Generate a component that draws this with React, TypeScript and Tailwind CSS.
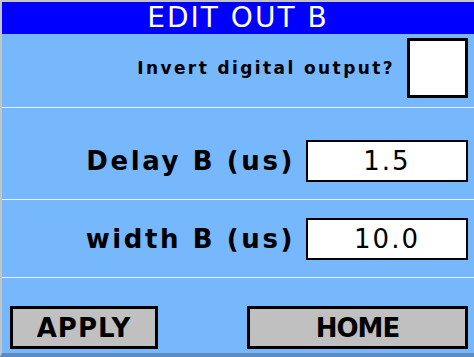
import React from 'react';

const font = { fontFamily: '"DejaVu Sans", "Liberation Sans", sans-serif' };

function Field({ label, value }: { label: string; value: string }) {
  return (
    <div className="flex justify-end items-start h-[77px] pt-[18px] pr-[6px]">
      <span className="h-[42px] flex items-center mr-[11px] text-[26px] font-bold tracking-[2.6px] text-black leading-none">
        {label}
      </span>
      <div className="w-[162px] h-[42px] bg-white border-2 border-black flex items-center justify-center text-[26px] tracking-[2px] text-black leading-none">
        {value}
      </div>
    </div>
  );
}

export default function App() {
  return (
    <div
      className="w-[474px] h-[357px] flex flex-col bg-[#77b7fc] border-t-2 border-l-2 border-t-[#c4c4c4] border-l-[#c4c4c4] border-b-[4px] border-b-[#5b8cc4] overflow-hidden"
      style={font}
    >
      {/* Title */}
      <div className="h-[32px] bg-[#0000ff] flex items-center justify-center text-white text-[28px] tracking-[2px] leading-none">
        EDIT OUT B
      </div>

      {/* Invert */}
      <div className="flex justify-end items-start h-[73px] pt-[4px] pr-[6px]">
        <span className="h-[60px] flex items-center mr-[12px] text-[17px] font-bold tracking-[2.4px] text-black leading-none">
          Invert digital output?
        </span>
        <div className="w-[61px] h-[60px] bg-white border-[3px] border-black" />
      </div>
      <div className="h-px bg-[#e6f2ff]" />

      <div className="h-[14px]" />
      <Field label="Delay B (us)" value="1.5" />
      <div className="h-px bg-[#e6f2ff]" />

      <Field label="width B (us)" value="10.0" />
      <div className="h-px bg-[#e6f2ff]" />

      {/* Buttons */}
      <div className="flex justify-between items-start pt-[28px] pl-[8px] pr-[6px]">
        <button className="w-[148px] h-[43px] bg-[#c0c0c0] border-[3px] border-black flex items-center justify-center text-[26px] font-bold tracking-[1px] text-black leading-none">
          APPLY
        </button>
        <button className="w-[221px] h-[43px] bg-[#c0c0c0] border-[3px] border-black flex items-center justify-center text-[26px] font-bold tracking-[-1px] text-black leading-none">
          HOME
        </button>
      </div>
    </div>
  );
}
